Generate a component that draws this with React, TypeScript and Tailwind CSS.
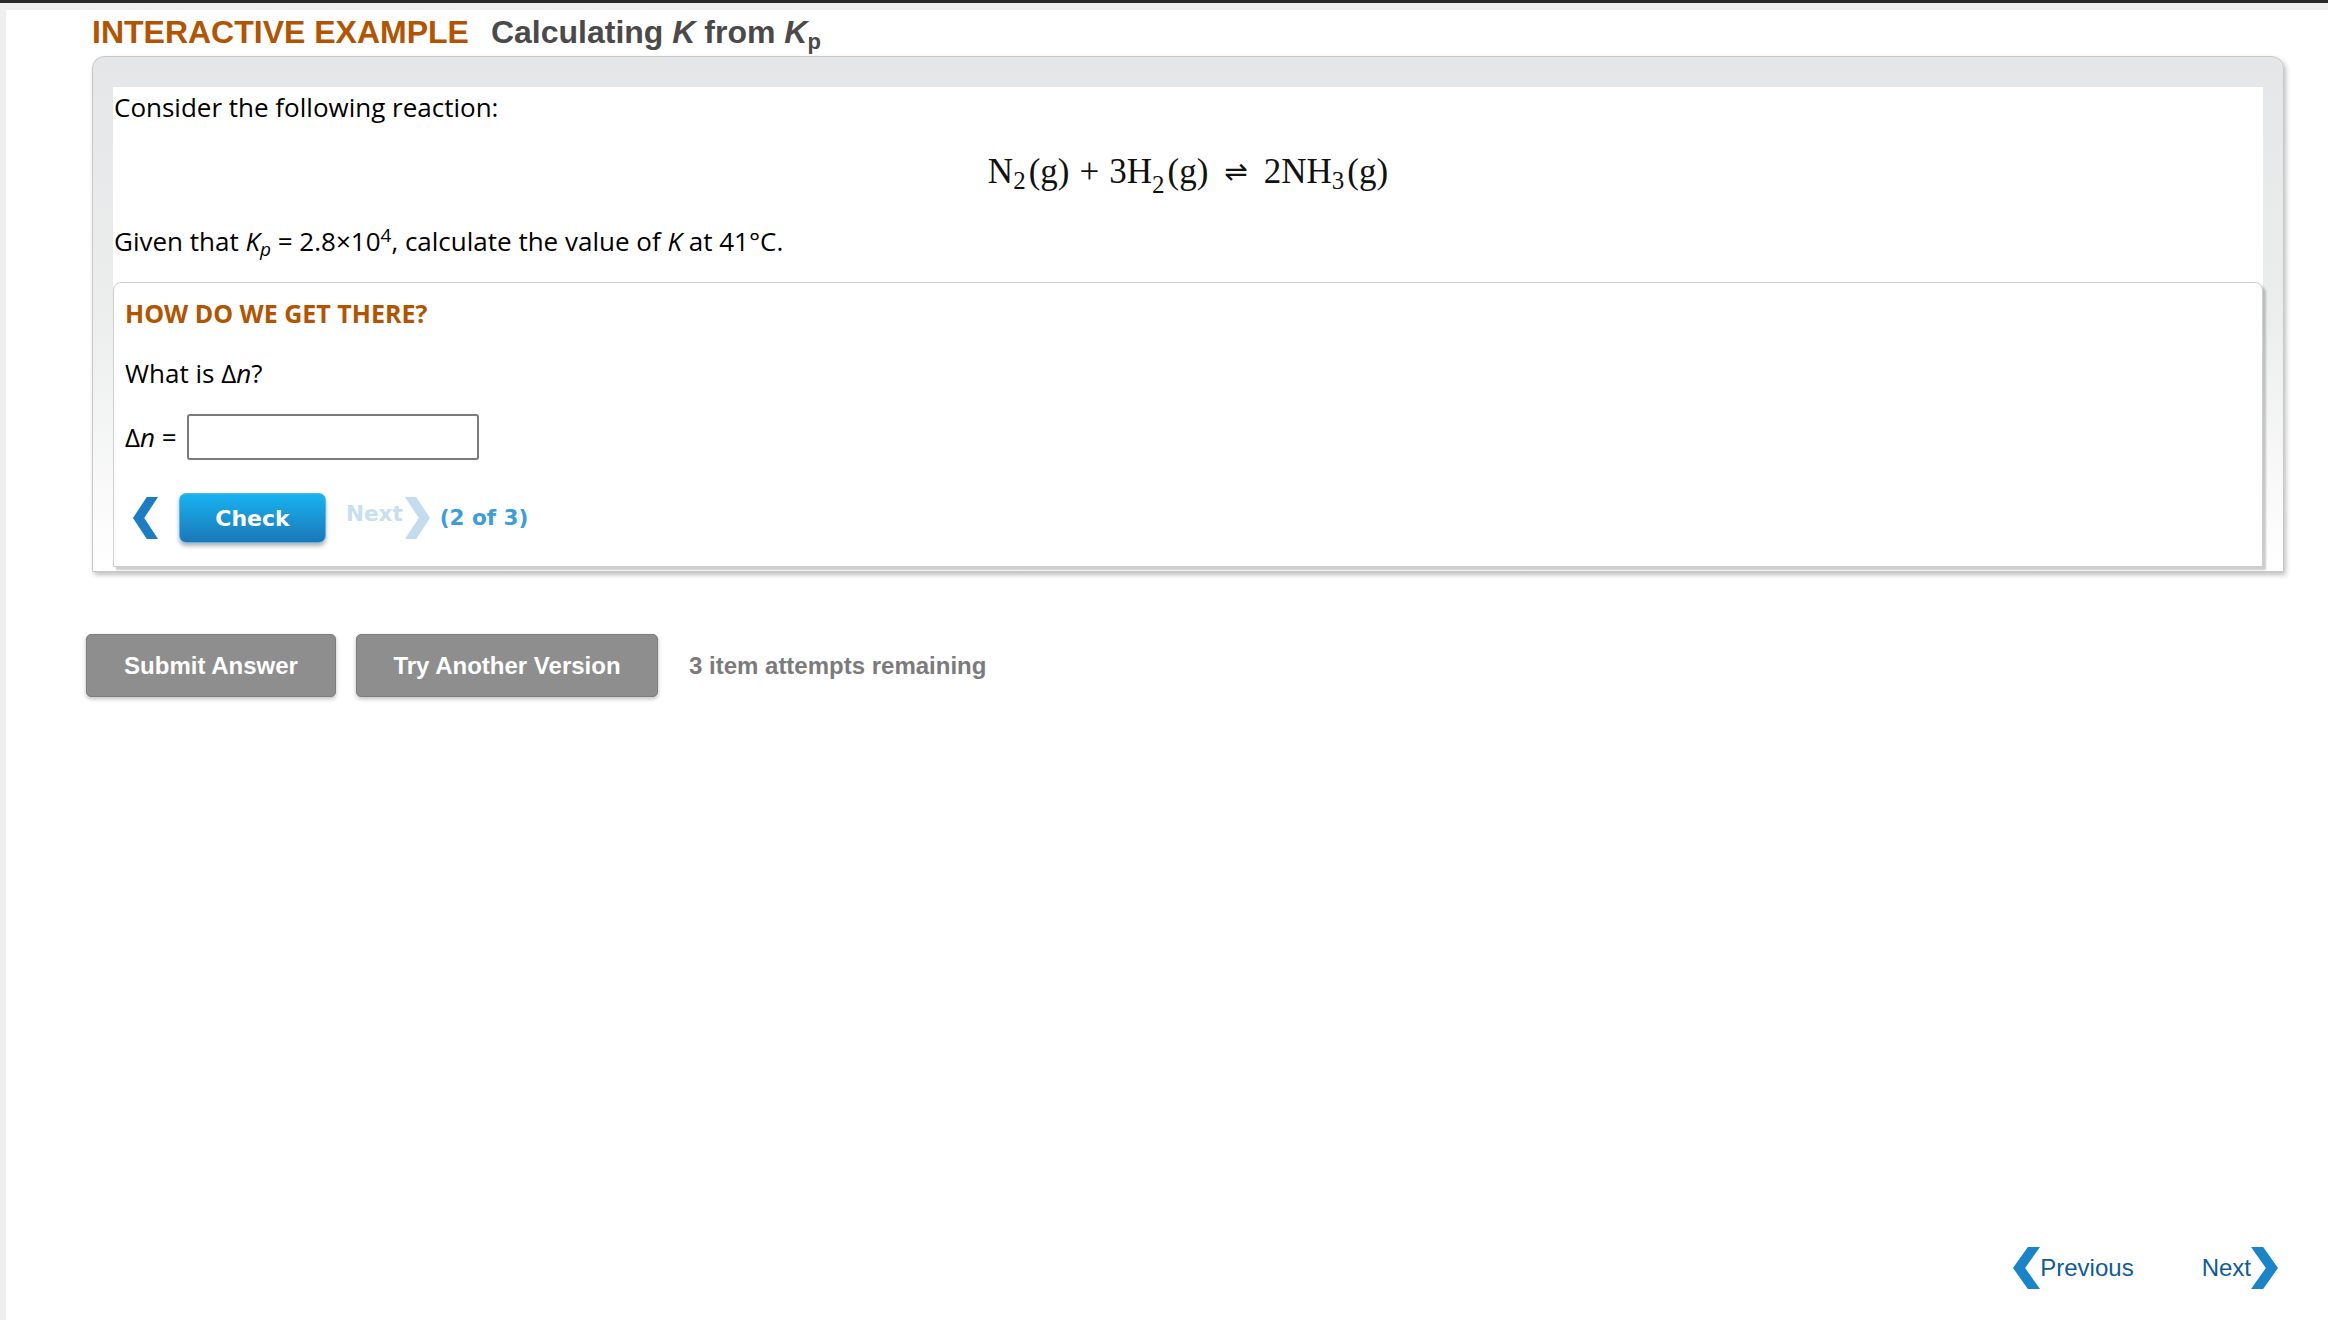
import React from "react";

const arial = { fontFamily: '"Liberation Sans", Arial, sans-serif' };

function Chevron({ dir, className }: { dir: "left" | "right"; className?: string }) {
  const pts = dir === "left" ? "20,0 11,0 0,15 11,30 20,30 9,15" : "0,0 9,0 20,15 9,30 0,30 11,15";
  return (
    <svg viewBox="0 0 20 30" className={className} preserveAspectRatio="none">
      <polygon points={pts} fill="currentColor" />
    </svg>
  );
}

export default function App() {
  return (
    <div className="min-h-screen flex flex-col bg-white">
      <div className="h-[3px] bg-[#2a2a2a]" />
      <div className="flex flex-1">
        <div className="w-[6px] bg-[#efefef]" />
        <div className="flex-1 flex flex-col border-t-[7px] border-[#f0f0f0]">
          {/* title */}
          <div className="ml-[86px] mt-[4px] h-[36px] flex items-baseline gap-[22px] text-[32px] leading-[36px] font-bold" style={arial}>
            <span className="text-[#b25400]">INTERACTIVE EXAMPLE</span>
            <span className="text-[#4a4a4a]">
              Calculating <i>K</i> from <i>K</i>
              <sub className="text-[22px]">p</sub>
            </span>
          </div>

          {/* example panel */}
          <div
            className="ml-[86px] mr-[44px] mt-[6px] rounded-t-[12px] border border-[#c8c8c8] bg-linear-to-b from-[#e5e6e7] via-[#eceded] to-white px-[20px] pt-[30px] pb-[4px] shadow-[2px_3px_5px_rgba(0,0,0,0.25)]"
            style={{ fontFamily: '"Open Sans", "Noto Sans", sans-serif' }}
          >
            <div className="bg-white text-black">
              <p className="pl-[1px] pt-[3px] text-[26px] leading-[34px]">Consider the following reaction:</p>

              <div className="mt-[28px] h-[40px] flex items-center justify-center text-[35px] text-[#111]" style={{ fontFamily: '"Liberation Serif", "Times New Roman", serif' }}>
                <span>
                  N<sub className="text-[25px]">2</sub>
                  <span className="ml-[3px]">(g)</span>
                  <span className="mx-[10px]">+</span>3H<sub className="text-[25px] -bottom-[0.4em]">2</sub>
                  <span className="ml-[3px]">(g)</span>
                </span>
                <span className="mx-[16px] text-[28px]" style={{ fontFamily: '"DejaVu Sans", sans-serif' }}>⇌</span>
                <span>
                  2NH<sub className="text-[25px]">3</sub>
                  <span className="ml-[3px]">(g)</span>
                </span>
              </div>

              <p className="pl-[1px] mt-[32px] text-[26px] leading-[34px]">
                Given that <i>K</i>
                <sub className="text-[19px]">
                  <i>p</i>
                </sub>{" "}
                = 2.8×10<sup className="text-[19px]">4</sup>, calculate the value of <i>K</i> at 41°C.
              </p>

              {/* hint box */}
              <div className="mt-[24px] rounded-t-[8px] border border-[#cfcfcf] bg-white pl-[11px] pt-[15px] pb-[23px] shadow-[3px_3px_2px_rgba(0,0,0,0.2)]">
                <h3 className="text-[25px] leading-[30px] font-bold text-[#b25400]">HOW DO WE GET THERE?</h3>
                <p className="mt-[28px] text-[26px] leading-[34px]">
                  What is Δ<i>n</i>?
                </p>
                <div className="mt-[24px] h-[46px] flex items-center gap-[10px] text-[26px]">
                  <span>
                    Δ<i>n</i> =
                  </span>
                  <input type="text" className="h-[46px] w-[292px] rounded-[3px] border-2 border-[#7b7b7b] bg-white outline-none" />
                </div>
                <div className="mt-[33px] h-[50px] flex items-center" style={{ fontFamily: '"DejaVu Sans", Verdana, sans-serif' }}>
                  <Chevron dir="left" className="ml-[8px] h-[42px] w-[25px] text-[#1b7ec2]" />
                  <button className="ml-[21px] h-[50px] w-[147px] rounded-[7px] border border-[#56b6ea] bg-linear-to-b from-[#17b3f1] to-[#1a78b8] text-[22px] font-bold text-white shadow-[0_3px_4px_rgba(0,0,0,0.3)]">
                    Check
                  </button>
                  <span className="ml-[20px] -mt-[8px] text-[21.5px] font-bold text-[#c6dff1]">Next</span>
                  <Chevron dir="right" className="ml-[2px] h-[42px] w-[25px] text-[#c3dcef]" />
                  <span className="ml-[10px] text-[21.5px] font-bold text-[#3a9ddd]">(2 of 3)</span>
                </div>
              </div>
            </div>
          </div>

          {/* action buttons */}
          <div className="ml-[80px] mt-[62px] flex items-center" style={arial}>
            <button className="h-[63px] w-[250px] rounded-[5px] border border-[#7d7d7d] bg-[#8e8e8e] text-[24px] font-bold text-white shadow-[0_2px_4px_rgba(0,0,0,0.25)]">
              Submit Answer
            </button>
            <button className="ml-[20px] h-[63px] w-[302px] rounded-[5px] border border-[#7d7d7d] bg-[#8e8e8e] text-[24px] font-bold text-white shadow-[0_2px_4px_rgba(0,0,0,0.25)]">
              Try Another Version
            </button>
            <span className="ml-[31px] text-[24px] font-bold text-[#7b7b7b]">3 item attempts remaining</span>
          </div>

          {/* page nav */}
          <div className="mt-auto mb-[31px] mr-[50px] flex justify-end items-center text-[24px] text-[#0d5c99]" style={arial}>
            <a href="#" className="flex items-center">
              <Chevron dir="left" className="h-[42px] w-[27px] text-[#1a84c8]" />
              <span>Previous</span>
            </a>
            <a href="#" className="ml-[68px] flex items-center">
              <span>Next</span>
              <Chevron dir="right" className="h-[42px] w-[27px] text-[#1a84c8]" />
            </a>
          </div>
        </div>
      </div>
    </div>
  );
}
